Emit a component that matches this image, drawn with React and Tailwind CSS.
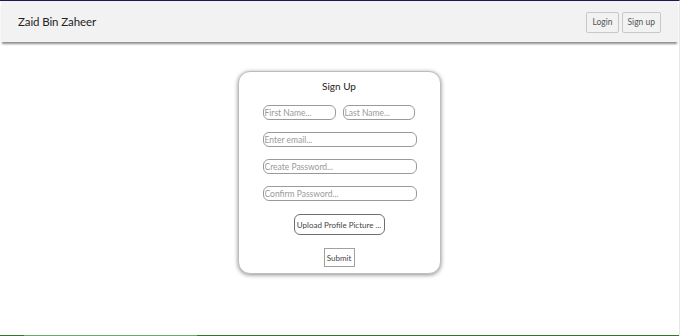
import React from 'react';

const Field = ({ placeholder, className = '' }) => (
    <input
        type="text"
        placeholder={placeholder}
        className={`h-[15px] px-[1px] border border-[#9a9a9a] rounded-[6px] text-[8.5px] text-[#555] placeholder:text-[#9a9a9a] bg-white caret-transparent cursor-none focus:outline-none ${className}`}
    />
);

const App = () => {
    return (
        <div className="h-[336px] w-[680px] flex flex-col bg-white border-t border-[#1c1c4a] border-r border-r-[#e6e6e6] font-['Lato','Open_Sans',sans-serif] overflow-hidden cursor-none">
            {/* Navbar */}
            <header className="h-[41px] shrink-0 mx-[1px] bg-[#f2f2f2] flex items-center justify-between pl-[17px] pr-[17px] shadow-[0_3px_2px_-1px_rgba(0,0,0,0.45)]">
                <span className="text-[11.5px] text-[#222] tracking-[-0.1px]">Zaid Bin Zaheer</span>
                <div className="flex gap-[3px] mt-[1px]">
                    <button className="h-[21px] px-[5px] border border-[#c8c8c8] rounded-[2px] text-[8.5px] text-[#555] bg-[#f2f2f2]">Login</button>
                    <button className="h-[21px] px-[5px] border border-[#c8c8c8] rounded-[2px] text-[8.5px] text-[#555] bg-[#f2f2f2]">Sign up</button>
                </div>
            </header>

            {/* Main */}
            <main className="flex-1 flex justify-center pt-[29px]">
                <div className="w-[203px] h-[203px] ml-[-1px] bg-white border border-[#bdbdbd] rounded-[12px] shadow-[0_1px_4px_rgba(0,0,0,0.45)] flex flex-col items-center">
                    <h2 className="mt-[7px] text-[10px] text-[#222]">Sign Up</h2>
                    <div className="mt-[11px] w-[154px] flex flex-col gap-[12px] ml-[1px]">
                        <div className="flex justify-between pr-[2px]">
                            <Field placeholder="First Name..." className="w-[73px]" />
                            <Field placeholder="Last Name..." className="w-[72px]" />
                        </div>
                        <Field placeholder="Enter email..." className="w-[154px]" />
                        <Field placeholder="Create Password..." className="w-[154px]" />
                        <Field placeholder="Confirm Password..." className="w-[154px]" />
                    </div>
                    <button className="mt-[13px] w-[91px] h-[21px] border border-[#6e6e6e] rounded-[6px] text-[8px] text-[#444] bg-white">
                        Upload Profile Picture ...
                    </button>
                    <button className="mt-[13px] w-[31px] h-[19px] border border-[#a0a0a0] text-[8px] text-[#444] bg-white">
                        Submit
                    </button>
                </div>
            </main>

            {/* bottom strip */}
            <div className="h-[1px] shrink-0 flex">
                <div className="w-[24px] bg-[#2b7a2b]"></div>
                <div className="w-[173px] bg-[#6fa56f]"></div>
                <div className="flex-1 bg-[#2b7a2b]"></div>
            </div>
        </div>
    );
};

export default App;
